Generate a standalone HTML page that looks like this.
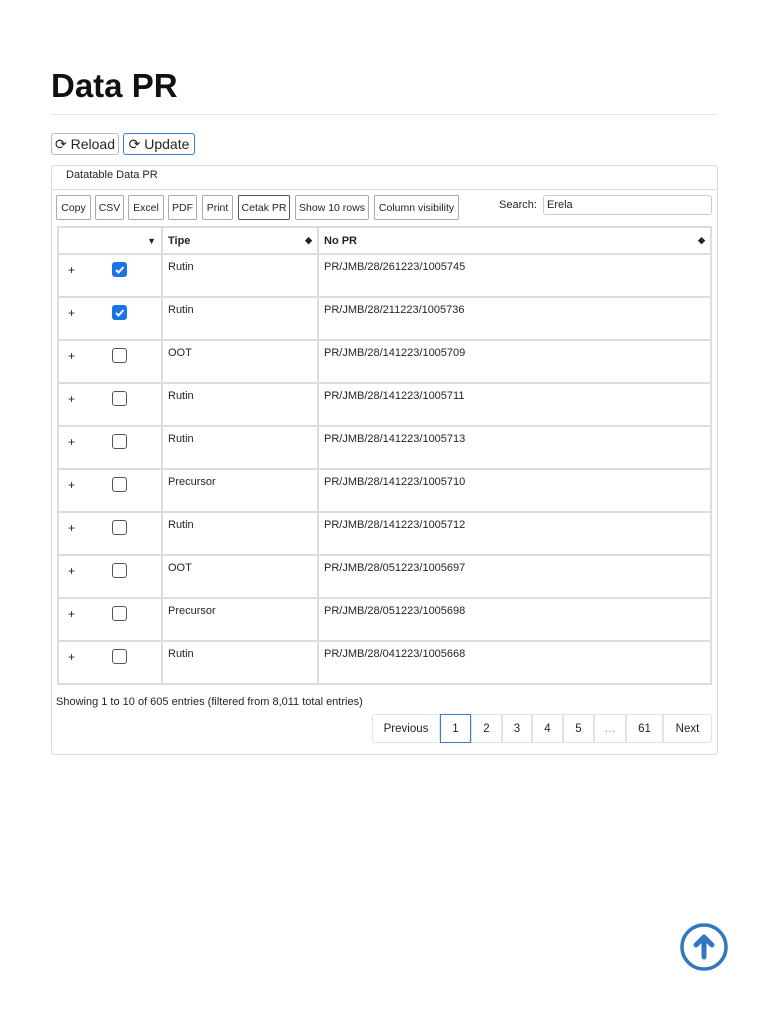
<!DOCTYPE html>
<html><head><meta charset="utf-8"><style>
*{box-sizing:border-box}
body{margin:0;width:768px;height:1024px;background:#fff;font-family:"Liberation Sans",sans-serif;color:#212529;position:relative}
.abs{position:absolute}
h1{position:absolute;left:51px;top:64px;margin:0;font-size:33px;font-weight:bold;line-height:44px;color:#111}
.hr{position:absolute;left:51px;top:114px;width:666px;border-top:1px solid #e5e5e5}
.btn{position:absolute;border:1px solid #bbb;border-radius:3px;font-size:14px;display:flex;align-items:center;justify-content:center;background:#fff}
.sb{position:absolute;top:195px;height:25px;border:1px solid #aaa;border-radius:2px;font-size:10.5px;display:flex;align-items:center;justify-content:center;background:#fff}
.card{position:absolute;left:51px;top:165px;width:667px;height:590px;border:1px solid #ddd;border-radius:4px}
table{position:absolute;left:57px;top:226px;width:655px;border-collapse:collapse;font-size:11px}
td,th{border:2px solid #ddd;vertical-align:top;padding:6px 5px;text-align:left}
th{height:27px;padding:5px 5px;vertical-align:middle}
tr.r td{height:43px}
.cb{display:inline-block;width:15px;height:15px;border:1px solid #555;border-radius:3px;margin-top:1px;margin-left:37px;vertical-align:top}
.cb.on{background:#1a73e8;border-color:#1a73e8;position:relative}
.plus{display:inline-block;margin-top:2px;margin-left:4px;font-size:12px}
.pg{position:absolute;top:714px;height:29px;border:1px solid #e2e2e2;font-size:11.5px;display:flex;align-items:center;justify-content:center;margin-left:-1px}
</style></head><body>
<h1>Data PR</h1>
<div class="hr"></div>
<div class="btn" style="left:51px;top:133px;width:68px;height:22px">⟳&nbsp;Reload</div>
<div class="btn" style="left:123px;top:133px;width:72px;height:22px;border-color:#3a7bd5">⟳&nbsp;Update</div>
<div class="card"></div>
<div class="abs" style="left:51px;top:189px;width:667px;border-top:1px solid #ddd"></div>
<div class="abs" style="left:66px;top:169px;font-size:11px">Datatable Data PR</div>
<div class="sb" style="left:56px;width:35px">Copy</div>
<div class="sb" style="left:95px;width:29px">CSV</div>
<div class="sb" style="left:128px;width:36px">Excel</div>
<div class="sb" style="left:168px;width:29px">PDF</div>
<div class="sb" style="left:202px;width:31px">Print</div>
<div class="sb" style="left:238px;width:52px;border-color:#555">Cetak PR</div>
<div class="sb" style="left:295px;width:74px">Show 10 rows</div>
<div class="sb" style="left:374px;width:85px">Column visibility</div>
<div class="abs" style="left:499px;top:199px;font-size:11px">Search:</div>
<div class="abs" style="left:543px;top:195px;width:169px;height:20px;border:1px solid #ccc;border-radius:3px;font-size:11px;padding:3px 3px">Erela</div>
<table>
<tr><th style="width:104px;text-align:right;font-size:9px">▼</th><th style="width:156px">Tipe<span style="float:right;font-size:9px">◆</span></th><th>No PR<span style="float:right;font-size:9px">◆</span></th></tr>
<tr class="r"><td><span class="plus">+</span><span class="cb on"><svg width="13" height="13" viewBox="0 0 13 13"><path d="M3 7l2.5 2.5L10.5 4" stroke="#fff" stroke-width="2" fill="none"/></svg></span></td><td>Rutin</td><td>PR/JMB/28/261223/1005745</td></tr>
<tr class="r"><td><span class="plus">+</span><span class="cb on"><svg width="13" height="13" viewBox="0 0 13 13"><path d="M3 7l2.5 2.5L10.5 4" stroke="#fff" stroke-width="2" fill="none"/></svg></span></td><td>Rutin</td><td>PR/JMB/28/211223/1005736</td></tr>
<tr class="r"><td><span class="plus">+</span><span class="cb"></span></td><td>OOT</td><td>PR/JMB/28/141223/1005709</td></tr>
<tr class="r"><td><span class="plus">+</span><span class="cb"></span></td><td>Rutin</td><td>PR/JMB/28/141223/1005711</td></tr>
<tr class="r"><td><span class="plus">+</span><span class="cb"></span></td><td>Rutin</td><td>PR/JMB/28/141223/1005713</td></tr>
<tr class="r"><td><span class="plus">+</span><span class="cb"></span></td><td>Precursor</td><td>PR/JMB/28/141223/1005710</td></tr>
<tr class="r"><td><span class="plus">+</span><span class="cb"></span></td><td>Rutin</td><td>PR/JMB/28/141223/1005712</td></tr>
<tr class="r"><td><span class="plus">+</span><span class="cb"></span></td><td>OOT</td><td>PR/JMB/28/051223/1005697</td></tr>
<tr class="r"><td><span class="plus">+</span><span class="cb"></span></td><td>Precursor</td><td>PR/JMB/28/051223/1005698</td></tr>
<tr class="r"><td><span class="plus">+</span><span class="cb"></span></td><td>Rutin</td><td>PR/JMB/28/041223/1005668</td></tr>
</table>
<div class="abs" style="left:56px;top:696px;font-size:11px">Showing 1 to 10 of 605 entries (filtered from 8,011 total entries)</div>
<div class="pg" style="left:373px;width:68px;border-radius:3px 0 0 3px">Previous</div>
<div class="pg" style="left:441px;width:31px;border-color:#3a7bd5;z-index:2">1</div>
<div class="pg" style="left:472px;width:31px">2</div>
<div class="pg" style="left:503px;width:30px">3</div>
<div class="pg" style="left:533px;width:31px">4</div>
<div class="pg" style="left:564px;width:31px">5</div>
<div class="pg" style="left:595px;width:32px;color:#888">…</div>
<div class="pg" style="left:627px;width:37px">61</div>
<div class="pg" style="left:664px;width:49px;border-radius:0 3px 3px 0">Next</div>
<svg class="abs" style="left:679px;top:922px" width="50" height="50" viewBox="0 0 50 50"><circle cx="25" cy="25" r="22" fill="none" stroke="#2f78c0" stroke-width="3.5"/><path d="M25 35V16M17 23l8-8 8 8" fill="none" stroke="#2f78c0" stroke-width="5" stroke-linecap="round" stroke-linejoin="round"/></svg>
</body></html>
